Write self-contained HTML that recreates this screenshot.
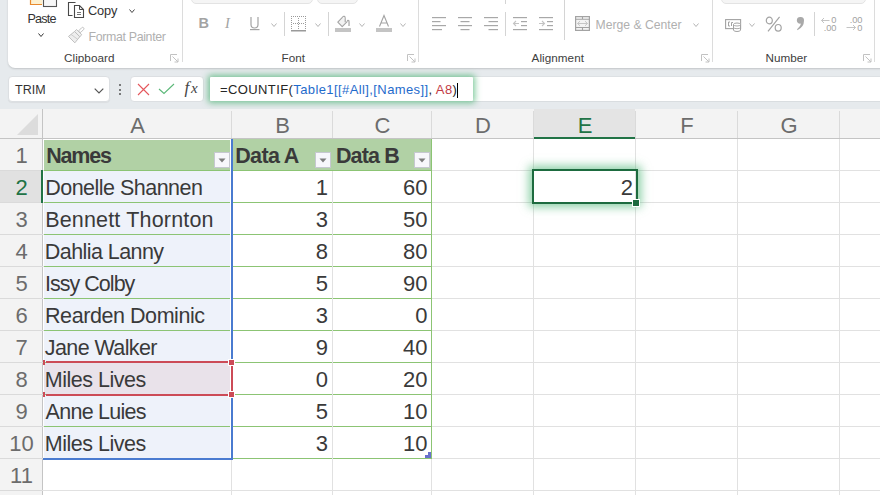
<!DOCTYPE html>
<html><head><meta charset="utf-8"><style>
html,body{margin:0;padding:0;}
body{width:880px;height:495px;overflow:hidden;position:relative;background:#e6eaed;font-family:"Liberation Sans", sans-serif;}
</style></head><body>
<div style="position:absolute;left:8px;top:-12px;width:900px;height:80px;background:#fff;border-radius:7px;box-shadow:0 1px 2px rgba(0,0,0,0.16);"></div>
<div style="position:absolute;left:182px;top:0px;width:1px;height:62px;background:#dcdcdc;"></div>
<div style="position:absolute;left:418px;top:0px;width:1px;height:62px;background:#dcdcdc;"></div>
<div style="position:absolute;left:712px;top:0px;width:1px;height:62px;background:#dcdcdc;"></div>
<div style="position:absolute;left:874px;top:0px;width:1px;height:62px;background:#dcdcdc;"></div>
<div style="position:absolute;left:284px;top:12px;width:1px;height:24px;background:#d4d4d4;"></div>
<div style="position:absolute;left:328px;top:12px;width:1px;height:24px;background:#d4d4d4;"></div>
<div style="position:absolute;left:505px;top:12px;width:1px;height:24px;background:#d4d4d4;"></div>
<div style="position:absolute;left:505px;top:0px;width:1px;height:4px;background:#d4d4d4;"></div>
<div style="position:absolute;left:564px;top:0px;width:1px;height:40px;background:#d4d4d4;"></div>
<div style="position:absolute;left:814px;top:12px;width:1px;height:24px;background:#d4d4d4;"></div>
<div style="position:absolute;left:191px;top:-20px;width:122px;height:23.5px;background:#f5f5f5;border:1px solid #e3e3e3;border-radius:5px;box-sizing:border-box;"></div>
<div style="position:absolute;left:317px;top:-20px;width:41px;height:23.5px;background:#f5f5f5;border:1px solid #e3e3e3;border-radius:5px;box-sizing:border-box;"></div>
<div style="position:absolute;left:721px;top:-20px;width:145px;height:23.5px;background:#f5f5f5;border:1px solid #e3e3e3;border-radius:5px;box-sizing:border-box;"></div>
<div style="position:absolute;left:64px;top:51.41px;font-size:11.7px;line-height:13.07px;color:#404040;font-weight:400;white-space:nowrap;letter-spacing:0.05px;">Clipboard</div>
<div style="position:absolute;left:281.5px;top:51.41px;font-size:11.7px;line-height:13.07px;color:#404040;font-weight:400;white-space:nowrap;letter-spacing:0.05px;">Font</div>
<div style="position:absolute;left:531.6px;top:51.41px;font-size:11.7px;line-height:13.07px;color:#404040;font-weight:400;white-space:nowrap;letter-spacing:0.05px;">Alignment</div>
<div style="position:absolute;left:765.4px;top:51.41px;font-size:11.7px;line-height:13.07px;color:#404040;font-weight:400;white-space:nowrap;letter-spacing:0.05px;">Number</div>
<svg style="position:absolute;left:170px;top:54px" width="9" height="9" viewBox="0 0 9 9"><path d="M0.5 7V0.5H7" fill="none" stroke="#c2c2c2" stroke-width="1"/><path d="M2.5 2.5L8 8M8 4.5V8H4.5" fill="none" stroke="#c2c2c2" stroke-width="1"/></svg>
<svg style="position:absolute;left:407px;top:54px" width="9" height="9" viewBox="0 0 9 9"><path d="M0.5 7V0.5H7" fill="none" stroke="#c2c2c2" stroke-width="1"/><path d="M2.5 2.5L8 8M8 4.5V8H4.5" fill="none" stroke="#c2c2c2" stroke-width="1"/></svg>
<svg style="position:absolute;left:701px;top:54px" width="9" height="9" viewBox="0 0 9 9"><path d="M0.5 7V0.5H7" fill="none" stroke="#c2c2c2" stroke-width="1"/><path d="M2.5 2.5L8 8M8 4.5V8H4.5" fill="none" stroke="#c2c2c2" stroke-width="1"/></svg>
<svg style="position:absolute;left:863px;top:54px" width="9" height="9" viewBox="0 0 9 9"><path d="M0.5 7V0.5H7" fill="none" stroke="#c2c2c2" stroke-width="1"/><path d="M2.5 2.5L8 8M8 4.5V8H4.5" fill="none" stroke="#c2c2c2" stroke-width="1"/></svg>
<svg style="position:absolute;left:24px;top:0px;overflow:visible" width="40" height="10" viewBox="0 0 40 10"><rect x="6.5" y="-4" width="12" height="8.5" fill="#fdf0cf"/><path d="M6.5 -3V4.5H18" fill="none" stroke="#e8892c" stroke-width="1.2"/><rect x="19.5" y="-4" width="13" height="10.5" fill="#f7f7f7" stroke="#555" stroke-width="1.1"/></svg>
<div style="position:absolute;left:27.5px;top:11.60px;font-size:12.6px;line-height:14.07px;color:#333;font-weight:400;white-space:nowrap;letter-spacing:-0.8px;">Paste</div>
<svg style="position:absolute;left:37.5px;top:32.5px;overflow:visible" width="6" height="4" viewBox="0 0 6 4"><path d="M0.5 0.5L3.0 3.5L5.5 0.5" fill="none" stroke="#333" stroke-width="1"/></svg>
<svg style="position:absolute;left:64px;top:0px;overflow:visible" width="24" height="24" viewBox="0 0 24 24"><path d="M11.5 2.5H4.5V15.5H8.5" fill="none" stroke="#484848" stroke-width="1.1"/><path d="M10.5 5.5H15.5L19.5 9.5V17.5H10.5Z" fill="#fff" stroke="#484848" stroke-width="1.1"/><path d="M15.5 5.5V9.5H19.5" fill="none" stroke="#484848" stroke-width="1"/><path d="M13 12.5H17M13 14.5H17" stroke="#666" stroke-width="0.9"/></svg>
<div style="position:absolute;left:88px;top:3.72px;font-size:12.8px;line-height:14.30px;color:#333;font-weight:400;white-space:nowrap;letter-spacing:-0.2px;">Copy</div>
<svg style="position:absolute;left:129px;top:8.7px;overflow:visible" width="6" height="4" viewBox="0 0 6 4"><path d="M0.5 0.5L3.0 3.5L5.5 0.5" fill="none" stroke="#444" stroke-width="1"/></svg>
<svg style="position:absolute;left:64px;top:24px;overflow:visible" width="24" height="24" viewBox="0 0 24 24"><g transform="translate(12 11.3) rotate(45) scale(0.82)"><rect x="-1.6" y="-13" width="3.2" height="7.5" rx="1.6" fill="#fff" stroke="#bdbdbd" stroke-width="1.1"/><rect x="-4.5" y="-5.5" width="9" height="3.5" fill="#f0f0f0" stroke="#bdbdbd" stroke-width="1.1"/><path d="M-4.5 -2L4.5 -2L5.5 7.5L-5.5 7.5Z" fill="#eeeeee" stroke="#bdbdbd" stroke-width="1.1" stroke-linejoin="round"/><path d="M-5 3.5L5 2" stroke="#c4c4c4" stroke-width="0.9"/></g></svg>
<div style="position:absolute;left:88.5px;top:30.98px;font-size:12.4px;line-height:13.85px;color:#b0b0b0;font-weight:400;white-space:nowrap;letter-spacing:-0.35px;">Format Painter</div>
<div style="position:absolute;left:198.5px;top:14.88px;font-size:14.5px;line-height:16.20px;color:#a3a3a3;font-weight:700;white-space:nowrap;">B</div>
<div style="position:absolute;left:225px;top:14.88px;font-size:14.5px;line-height:16.20px;color:#a3a3a3;font-weight:400;white-space:nowrap;font-family:'Liberation Serif',serif;font-style:italic;">I</div>
<svg style="position:absolute;left:249px;top:16px;overflow:visible" width="12" height="15" viewBox="0 0 12 15"><path d="M2 1V8.5Q2 12 5.5 12Q9 12 9 8.5V1" fill="none" stroke="#a3a3a3" stroke-width="1.2"/><path d="M1 13.6H10.5" stroke="#a3a3a3" stroke-width="1.2"/></svg>
<svg style="position:absolute;left:271px;top:23px;overflow:visible" width="6" height="4" viewBox="0 0 6 4"><path d="M0.5 0.5L3.0 3.5L5.5 0.5" fill="none" stroke="#b5b5b5" stroke-width="1"/></svg>
<svg style="position:absolute;left:0;top:0" width="880" height="40"><rect x="291" y="16" width="1" height="1" fill="#9a9a9a"/><rect x="293" y="16" width="1" height="1" fill="#9a9a9a"/><rect x="295" y="16" width="1" height="1" fill="#9a9a9a"/><rect x="297" y="16" width="1" height="1" fill="#9a9a9a"/><rect x="299" y="16" width="1" height="1" fill="#9a9a9a"/><rect x="301" y="16" width="1" height="1" fill="#9a9a9a"/><rect x="303" y="16" width="1" height="1" fill="#9a9a9a"/><rect x="305" y="16" width="1" height="1" fill="#9a9a9a"/><rect x="291" y="18" width="1" height="1" fill="#9a9a9a"/><rect x="291" y="20" width="1" height="1" fill="#9a9a9a"/><rect x="291" y="22" width="1" height="1" fill="#9a9a9a"/><rect x="291" y="24" width="1" height="1" fill="#9a9a9a"/><rect x="291" y="26" width="1" height="1" fill="#9a9a9a"/><rect x="291" y="28" width="1" height="1" fill="#9a9a9a"/><rect x="305" y="18" width="1" height="1" fill="#9a9a9a"/><rect x="305" y="20" width="1" height="1" fill="#9a9a9a"/><rect x="305" y="22" width="1" height="1" fill="#9a9a9a"/><rect x="305" y="24" width="1" height="1" fill="#9a9a9a"/><rect x="305" y="26" width="1" height="1" fill="#9a9a9a"/><rect x="305" y="28" width="1" height="1" fill="#9a9a9a"/><rect x="298" y="18" width="1" height="1" fill="#9a9a9a"/><rect x="298" y="20" width="1" height="1" fill="#9a9a9a"/><rect x="298" y="22" width="1" height="1" fill="#9a9a9a"/><rect x="298" y="24" width="1" height="1" fill="#9a9a9a"/><rect x="298" y="26" width="1" height="1" fill="#9a9a9a"/><rect x="298" y="28" width="1" height="1" fill="#9a9a9a"/><rect x="293" y="23" width="1" height="1" fill="#9a9a9a"/><rect x="295" y="23" width="1" height="1" fill="#9a9a9a"/><rect x="297" y="23" width="1" height="1" fill="#9a9a9a"/><rect x="299" y="23" width="1" height="1" fill="#9a9a9a"/><rect x="301" y="23" width="1" height="1" fill="#9a9a9a"/><rect x="303" y="23" width="1" height="1" fill="#9a9a9a"/><rect x="291" y="30" width="15" height="1.5" fill="#9a9a9a"/></svg>
<svg style="position:absolute;left:314.5px;top:23px;overflow:visible" width="6" height="4" viewBox="0 0 6 4"><path d="M0.5 0.5L3.0 3.5L5.5 0.5" fill="none" stroke="#b5b5b5" stroke-width="1"/></svg>
<svg style="position:absolute;left:335px;top:14px;overflow:visible" width="17" height="18" viewBox="0 0 17 18"><path d="M7.6 3.2L2.8 8.2L7.2 12.6L12.2 7.6" fill="#f2f2f2" stroke="#a3a3a3" stroke-width="1.1" stroke-linejoin="round"/><path d="M7.6 3.2Q8.2 2 9.3 2.3Q10.2 2.7 10.2 4.2V8.2" fill="none" stroke="#a3a3a3" stroke-width="1.1"/><path d="M12.2 7.4Q13 5.6 13.8 6.6Q14.2 7.3 14 12" fill="none" stroke="#a3a3a3" stroke-width="1.2"/><rect x="0" y="14" width="16" height="4" fill="#c4c4c4"/></svg>
<svg style="position:absolute;left:358.5px;top:23px;overflow:visible" width="6" height="4" viewBox="0 0 6 4"><path d="M0.5 0.5L3.0 3.5L5.5 0.5" fill="none" stroke="#b5b5b5" stroke-width="1"/></svg>
<svg style="position:absolute;left:376px;top:14px;overflow:visible" width="17" height="18" viewBox="0 0 17 18"><path d="M3.5 12.5L8 1.5L12.5 12.5M5 9H11" fill="none" stroke="#a3a3a3" stroke-width="1.1"/><rect x="0" y="14" width="16" height="4" fill="#c4c4c4"/></svg>
<svg style="position:absolute;left:399.5px;top:23px;overflow:visible" width="6" height="4" viewBox="0 0 6 4"><path d="M0.5 0.5L3.0 3.5L5.5 0.5" fill="none" stroke="#b5b5b5" stroke-width="1"/></svg>
<svg style="position:absolute;left:0;top:0" width="880" height="40"><rect x="432" y="17" width="14" height="1.2" fill="#a8a8a8"/><rect x="432" y="21" width="8.5" height="1.2" fill="#a8a8a8"/><rect x="432" y="25" width="14" height="1.2" fill="#a8a8a8"/><rect x="432" y="29" width="10" height="1.2" fill="#a8a8a8"/></svg>
<svg style="position:absolute;left:0;top:0" width="880" height="40"><rect x="458" y="17" width="14" height="1.2" fill="#a8a8a8"/><rect x="460.5" y="21" width="9" height="1.2" fill="#a8a8a8"/><rect x="458" y="25" width="14" height="1.2" fill="#a8a8a8"/><rect x="460.5" y="29" width="9" height="1.2" fill="#a8a8a8"/></svg>
<svg style="position:absolute;left:0;top:0" width="880" height="40"><rect x="484" y="17" width="14" height="1.2" fill="#a8a8a8"/><rect x="488.5" y="21" width="9.5" height="1.2" fill="#a8a8a8"/><rect x="484" y="25" width="14" height="1.2" fill="#a8a8a8"/><rect x="488.5" y="29" width="9.5" height="1.2" fill="#a8a8a8"/></svg>
<svg style="position:absolute;left:0;top:0" width="880" height="40"><rect x="513" y="17" width="14" height="1.2" fill="#a8a8a8"/><rect x="521" y="21" width="6" height="1.2" fill="#a8a8a8"/><rect x="521" y="25" width="6" height="1.2" fill="#a8a8a8"/><rect x="513" y="29" width="14" height="1.2" fill="#a8a8a8"/></svg>
<svg style="position:absolute;left:0;top:0" width="880" height="40"><rect x="539" y="17" width="14" height="1.2" fill="#a8a8a8"/><rect x="547" y="21" width="6" height="1.2" fill="#a8a8a8"/><rect x="547" y="25" width="6" height="1.2" fill="#a8a8a8"/><rect x="539" y="29" width="14" height="1.2" fill="#a8a8a8"/></svg>
<svg style="position:absolute;left:512px;top:20px;overflow:visible" width="8" height="7" viewBox="0 0 8 7"><path d="M7 3.5H1.5M4 1L1.5 3.5L4 6" fill="none" stroke="#c4c4c4" stroke-width="1.1"/></svg>
<svg style="position:absolute;left:538px;top:20px;overflow:visible" width="8" height="7" viewBox="0 0 8 7"><path d="M1 3.5H6.5M4 1L6.5 3.5L4 6" fill="none" stroke="#c4c4c4" stroke-width="1.1"/></svg>
<svg style="position:absolute;left:575px;top:16px;overflow:visible" width="15" height="15" viewBox="0 0 15 15"><rect x="0.6" y="0.6" width="13.8" height="13.8" fill="#f4f4f4" stroke="#a3a3a3" stroke-width="1.2"/><path d="M0.5 3.3H14.5M0.5 11.5H14.5M7.5 0.5V3.3M7.5 11.5V14.5" stroke="#a3a3a3" stroke-width="1.1"/><path d="M2.5 7.5H12.5M5 5.2L2.5 7.5L5 9.8M10 5.2L12.5 7.5L10 9.8" fill="none" stroke="#c6c6c6" stroke-width="1"/></svg>
<div style="position:absolute;left:595.5px;top:19.26px;font-size:12.2px;line-height:13.63px;color:#b0b0b0;font-weight:400;white-space:nowrap;">Merge &amp; Center</div>
<svg style="position:absolute;left:692.5px;top:23px;overflow:visible" width="6" height="4" viewBox="0 0 6 4"><path d="M0.5 0.5L3.0 3.5L5.5 0.5" fill="none" stroke="#b5b5b5" stroke-width="1"/></svg>
<svg style="position:absolute;left:725px;top:19px;overflow:visible" width="17" height="13" viewBox="0 0 17 13"><rect x="0.6" y="0.6" width="15" height="9" fill="none" stroke="#a3a3a3" stroke-width="1.1"/><path d="M5 3H3.5V7H5M6.5 7V3.5H8" fill="none" stroke="#a3a3a3" stroke-width="1"/><path d="M8.5 5.5Q8.5 4 12 4Q15.5 4 15.5 5.5V11Q15.5 12.5 12 12.5Q8.5 12.5 8.5 11Z" fill="#fff" stroke="#a3a3a3" stroke-width="1"/><path d="M8.5 5.5Q8.5 7 12 7Q15.5 7 15.5 5.5M8.5 8.3Q8.5 9.7 12 9.7Q15.5 9.7 15.5 8.3" fill="none" stroke="#a3a3a3" stroke-width="0.9"/></svg>
<svg style="position:absolute;left:748.5px;top:23px;overflow:visible" width="6" height="4" viewBox="0 0 6 4"><path d="M0.5 0.5L3.0 3.5L5.5 0.5" fill="none" stroke="#b5b5b5" stroke-width="1"/></svg>
<svg style="position:absolute;left:765px;top:16px;overflow:visible" width="18" height="16" viewBox="0 0 18 16"><ellipse cx="4.3" cy="4.5" rx="3" ry="3.3" fill="none" stroke="#a3a3a3" stroke-width="1.2"/><ellipse cx="13.2" cy="11.8" rx="3" ry="3.3" fill="none" stroke="#a3a3a3" stroke-width="1.2"/><path d="M3 15.3L14.6 0.8" stroke="#a3a3a3" stroke-width="1.2"/></svg>
<svg style="position:absolute;left:790px;top:14px;overflow:visible" width="20" height="20" viewBox="0 0 20 20"><path d="M6.8 6.2A3.5 3.3 0 1 1 14 6.8Q14 13.2 7.4 16.2L7.1 15.2Q10.6 12.6 11 9.6Q7 10 6.8 6.2Z" fill="#a9a9a9"/></svg>
<div style="position:absolute;left:831.2px;top:14.58px;font-size:9.3px;line-height:10.39px;color:#a3a3a3;font-weight:400;white-space:nowrap;">0</div>
<div style="position:absolute;left:823.8px;top:22.58px;font-size:9.3px;line-height:10.39px;color:#a3a3a3;font-weight:400;white-space:nowrap;letter-spacing:-0.2px;">.00</div>
<svg style="position:absolute;left:820px;top:17px;overflow:visible" width="10" height="7" viewBox="0 0 10 7"><path d="M9.5 3.5H1.5M4 1L1.5 3.5L4 6" fill="none" stroke="#c4c4c4" stroke-width="1"/></svg>
<div style="position:absolute;left:849.8px;top:14.58px;font-size:9.3px;line-height:10.39px;color:#a3a3a3;font-weight:400;white-space:nowrap;letter-spacing:-0.2px;">.00</div>
<div style="position:absolute;left:857.2px;top:22.58px;font-size:9.3px;line-height:10.39px;color:#a3a3a3;font-weight:400;white-space:nowrap;">0</div>
<svg style="position:absolute;left:846px;top:24px;overflow:visible" width="11" height="7" viewBox="0 0 11 7"><path d="M0.5 3.5H9.5M7 1L9.5 3.5L7 6" fill="none" stroke="#c4c4c4" stroke-width="1"/></svg>
<div style="position:absolute;left:470px;top:76px;width:420px;height:26px;background:#fff;border-top:1px solid #dde1e4;border-bottom:1px solid #d9dde0;box-sizing:border-box;"></div>
<div style="position:absolute;left:8px;top:76px;width:102px;height:26px;background:#fff;border:1px solid #dcdfe2;box-shadow:0 1px 1px rgba(0,0,0,0.05);border-radius:4px;box-sizing:border-box;"></div>
<div style="position:absolute;left:15px;top:83.69px;font-size:12.5px;line-height:13.96px;color:#333;font-weight:400;white-space:nowrap;">TRIM</div>
<div style="position:absolute;left:130px;top:76px;width:74px;height:26px;background:#fff;border:1px solid #dcdfe2;border-radius:4px;box-sizing:border-box;"></div>
<svg style="position:absolute;left:94px;top:87.5px;overflow:visible" width="10" height="6" viewBox="0 0 10 6"><path d="M0.7 0.7L5 5L9.3 0.7" fill="none" stroke="#555" stroke-width="1.2"/></svg>
<div style="position:absolute;left:119px;top:84px;width:2px;height:2px;background:#555;border-radius:1px;"></div>
<div style="position:absolute;left:119px;top:88.5px;width:2px;height:2px;background:#555;border-radius:1px;"></div>
<div style="position:absolute;left:119px;top:93px;width:2px;height:2px;background:#555;border-radius:1px;"></div>
<svg style="position:absolute;left:137px;top:83px;overflow:visible" width="13" height="13" viewBox="0 0 13 13"><path d="M1 1L12 12M12 1L1 12" stroke="#e5575c" stroke-width="1.1"/></svg>
<svg style="position:absolute;left:158px;top:83px;overflow:visible" width="18" height="12" viewBox="0 0 18 12"><path d="M1 6L6 10.5L16 1" fill="none" stroke="#5bb878" stroke-width="1.1"/></svg>
<div style="position:absolute;left:184.5px;top:78.11px;font-size:17px;line-height:18.99px;color:#444;font-weight:400;white-space:nowrap;font-family:'Liberation Serif',serif;font-style:italic;">f</div>
<div style="position:absolute;left:191px;top:80.42px;font-size:15px;line-height:16.75px;color:#444;font-weight:400;white-space:nowrap;font-family:'Liberation Serif',serif;font-style:italic;">x</div>
<div style="position:absolute;left:210px;top:77px;width:263px;height:24px;background:#fff;box-shadow:0 0 6px 2px rgba(50,170,95,0.62);border-radius:1px;"></div>
<div style="position:absolute;left:220px;top:83.23px;font-size:13px;line-height:14.52px;color:#262626;font-weight:400;white-space:nowrap;letter-spacing:0.4px;"><span style="color:#262626">=COUNTIF(</span><span style="color:#1f6bcc">Table1[[#All],[Names]]</span><span style="color:#262626">, </span><span style="color:#c23b45">A8</span><span style="color:#262626">)</span></div>
<div style="position:absolute;left:457px;top:83px;width:1px;height:15px;background:#000;"></div>
<div style="position:absolute;left:0px;top:109px;width:880px;height:386px;background:#fff;"></div>
<div style="position:absolute;left:0px;top:109px;width:880px;height:29px;background:#f3f3f3;"></div>
<div style="position:absolute;left:0px;top:109px;width:42px;height:386px;background:#f3f3f3;"></div>
<div style="position:absolute;left:0px;top:138px;width:880px;height:1px;background:#c4c4c4;"></div>
<div style="position:absolute;left:42px;top:109px;width:1px;height:386px;background:#c4c4c4;"></div>
<div style="position:absolute;left:231px;top:111px;width:1px;height:27px;background:#dadada;"></div>
<div style="position:absolute;left:332px;top:111px;width:1px;height:27px;background:#dadada;"></div>
<div style="position:absolute;left:431px;top:111px;width:1px;height:27px;background:#dadada;"></div>
<div style="position:absolute;left:533px;top:111px;width:1px;height:27px;background:#dadada;"></div>
<div style="position:absolute;left:635px;top:111px;width:1px;height:27px;background:#dadada;"></div>
<div style="position:absolute;left:737px;top:111px;width:1px;height:27px;background:#dadada;"></div>
<div style="position:absolute;left:839px;top:111px;width:1px;height:27px;background:#dadada;"></div>
<div style="position:absolute;left:231px;top:139px;width:1px;height:356px;background:#e1e1e1;"></div>
<div style="position:absolute;left:332px;top:139px;width:1px;height:356px;background:#e1e1e1;"></div>
<div style="position:absolute;left:431px;top:139px;width:1px;height:356px;background:#e1e1e1;"></div>
<div style="position:absolute;left:533px;top:139px;width:1px;height:356px;background:#e1e1e1;"></div>
<div style="position:absolute;left:635px;top:139px;width:1px;height:356px;background:#e1e1e1;"></div>
<div style="position:absolute;left:737px;top:139px;width:1px;height:356px;background:#e1e1e1;"></div>
<div style="position:absolute;left:839px;top:139px;width:1px;height:356px;background:#e1e1e1;"></div>
<div style="position:absolute;left:0px;top:170px;width:880px;height:1px;background:#e1e1e1;"></div>
<div style="position:absolute;left:0px;top:202px;width:880px;height:1px;background:#e1e1e1;"></div>
<div style="position:absolute;left:0px;top:234px;width:880px;height:1px;background:#e1e1e1;"></div>
<div style="position:absolute;left:0px;top:266px;width:880px;height:1px;background:#e1e1e1;"></div>
<div style="position:absolute;left:0px;top:298px;width:880px;height:1px;background:#e1e1e1;"></div>
<div style="position:absolute;left:0px;top:330px;width:880px;height:1px;background:#e1e1e1;"></div>
<div style="position:absolute;left:0px;top:362px;width:880px;height:1px;background:#e1e1e1;"></div>
<div style="position:absolute;left:0px;top:394px;width:880px;height:1px;background:#e1e1e1;"></div>
<div style="position:absolute;left:0px;top:426px;width:880px;height:1px;background:#e1e1e1;"></div>
<div style="position:absolute;left:0px;top:458px;width:880px;height:1px;background:#e1e1e1;"></div>
<div style="position:absolute;left:0px;top:490px;width:880px;height:1px;background:#e1e1e1;"></div>
<div style="position:absolute;left:0px;top:170px;width:42px;height:1px;background:#dadada;"></div>
<div style="position:absolute;left:0px;top:202px;width:42px;height:1px;background:#dadada;"></div>
<div style="position:absolute;left:0px;top:234px;width:42px;height:1px;background:#dadada;"></div>
<div style="position:absolute;left:0px;top:266px;width:42px;height:1px;background:#dadada;"></div>
<div style="position:absolute;left:0px;top:298px;width:42px;height:1px;background:#dadada;"></div>
<div style="position:absolute;left:0px;top:330px;width:42px;height:1px;background:#dadada;"></div>
<div style="position:absolute;left:0px;top:362px;width:42px;height:1px;background:#dadada;"></div>
<div style="position:absolute;left:0px;top:394px;width:42px;height:1px;background:#dadada;"></div>
<div style="position:absolute;left:0px;top:426px;width:42px;height:1px;background:#dadada;"></div>
<div style="position:absolute;left:0px;top:458px;width:42px;height:1px;background:#dadada;"></div>
<div style="position:absolute;left:0px;top:490px;width:42px;height:1px;background:#dadada;"></div>
<div style="position:absolute;left:534px;top:109px;width:101px;height:28px;background:#e4e4e4;"></div>
<div style="position:absolute;left:534px;top:137px;width:101px;height:2px;background:#217346;"></div>
<div style="position:absolute;left:0px;top:171px;width:41px;height:31px;background:#e1e1e1;"></div>
<div style="position:absolute;left:41px;top:170px;width:2px;height:33px;background:#217346;"></div>
<svg style="position:absolute;left:17px;top:114px" width="22" height="21"><path d="M21 0V21H0Z" fill="#dcdcdc"/></svg>
<div style="position:absolute;left:37.5px;width:200px;text-align:center;top:114.09px;font-size:22px;line-height:24.57px;color:#6c6c6c;font-weight:400;white-space:nowrap;">A</div>
<div style="position:absolute;left:182.5px;width:200px;text-align:center;top:114.09px;font-size:22px;line-height:24.57px;color:#6c6c6c;font-weight:400;white-space:nowrap;">B</div>
<div style="position:absolute;left:282.5px;width:200px;text-align:center;top:114.09px;font-size:22px;line-height:24.57px;color:#6c6c6c;font-weight:400;white-space:nowrap;">C</div>
<div style="position:absolute;left:383.0px;width:200px;text-align:center;top:114.09px;font-size:22px;line-height:24.57px;color:#6c6c6c;font-weight:400;white-space:nowrap;">D</div>
<div style="position:absolute;left:485.0px;width:200px;text-align:center;top:114.09px;font-size:22px;line-height:24.57px;color:#217346;font-weight:400;white-space:nowrap;">E</div>
<div style="position:absolute;left:587.0px;width:200px;text-align:center;top:114.09px;font-size:22px;line-height:24.57px;color:#6c6c6c;font-weight:400;white-space:nowrap;">F</div>
<div style="position:absolute;left:689.0px;width:200px;text-align:center;top:114.09px;font-size:22px;line-height:24.57px;color:#6c6c6c;font-weight:400;white-space:nowrap;">G</div>
<div style="position:absolute;left:791.0px;width:200px;text-align:center;top:114.09px;font-size:22px;line-height:24.57px;color:#6c6c6c;font-weight:400;white-space:nowrap;">H</div>
<div style="position:absolute;left:-78.5px;width:200px;text-align:center;top:144.39px;font-size:22px;line-height:24.57px;color:#6c6c6c;font-weight:400;white-space:nowrap;">1</div>
<div style="position:absolute;left:-78.5px;width:200px;text-align:center;top:176.39px;font-size:22px;line-height:24.57px;color:#217346;font-weight:400;white-space:nowrap;">2</div>
<div style="position:absolute;left:-78.5px;width:200px;text-align:center;top:208.39px;font-size:22px;line-height:24.57px;color:#6c6c6c;font-weight:400;white-space:nowrap;">3</div>
<div style="position:absolute;left:-78.5px;width:200px;text-align:center;top:240.39px;font-size:22px;line-height:24.57px;color:#6c6c6c;font-weight:400;white-space:nowrap;">4</div>
<div style="position:absolute;left:-78.5px;width:200px;text-align:center;top:272.39px;font-size:22px;line-height:24.57px;color:#6c6c6c;font-weight:400;white-space:nowrap;">5</div>
<div style="position:absolute;left:-78.5px;width:200px;text-align:center;top:304.39px;font-size:22px;line-height:24.57px;color:#6c6c6c;font-weight:400;white-space:nowrap;">6</div>
<div style="position:absolute;left:-78.5px;width:200px;text-align:center;top:336.39px;font-size:22px;line-height:24.57px;color:#6c6c6c;font-weight:400;white-space:nowrap;">7</div>
<div style="position:absolute;left:-78.5px;width:200px;text-align:center;top:368.39px;font-size:22px;line-height:24.57px;color:#6c6c6c;font-weight:400;white-space:nowrap;">8</div>
<div style="position:absolute;left:-78.5px;width:200px;text-align:center;top:400.39px;font-size:22px;line-height:24.57px;color:#6c6c6c;font-weight:400;white-space:nowrap;">9</div>
<div style="position:absolute;left:-78.5px;width:200px;text-align:center;top:432.39px;font-size:22px;line-height:24.57px;color:#6c6c6c;font-weight:400;white-space:nowrap;">10</div>
<div style="position:absolute;left:-78.5px;width:200px;text-align:center;top:464.39px;font-size:22px;line-height:24.57px;color:#6c6c6c;font-weight:400;white-space:nowrap;">11</div>
<div style="position:absolute;left:44px;top:140px;width:186px;height:30px;background:#b1d1a5;"></div>
<div style="position:absolute;left:230px;top:139px;width:1px;height:320px;background:#fff;"></div>
<div style="position:absolute;left:233px;top:139px;width:198px;height:31px;background:#b1d1a5;"></div>
<div style="position:absolute;left:44px;top:171px;width:186px;height:31px;background:#eef2fa;"></div>
<div style="position:absolute;left:44px;top:203px;width:186px;height:31px;background:#eef2fa;"></div>
<div style="position:absolute;left:44px;top:235px;width:186px;height:31px;background:#eef2fa;"></div>
<div style="position:absolute;left:44px;top:267px;width:186px;height:31px;background:#eef2fa;"></div>
<div style="position:absolute;left:44px;top:299px;width:186px;height:31px;background:#eef2fa;"></div>
<div style="position:absolute;left:44px;top:331px;width:186px;height:31px;background:#eef2fa;"></div>
<div style="position:absolute;left:44px;top:363px;width:186px;height:31px;background:#eef2fa;"></div>
<div style="position:absolute;left:44px;top:395px;width:186px;height:31px;background:#eef2fa;"></div>
<div style="position:absolute;left:44px;top:427px;width:186px;height:31px;background:#eef2fa;"></div>
<div style="position:absolute;left:44px;top:170px;width:186px;height:1px;background:#8cc474;"></div>
<div style="position:absolute;left:233px;top:170px;width:198px;height:1px;background:#8cc474;"></div>
<div style="position:absolute;left:44px;top:202px;width:186px;height:1px;background:#8cc474;"></div>
<div style="position:absolute;left:233px;top:202px;width:198px;height:1px;background:#8cc474;"></div>
<div style="position:absolute;left:44px;top:234px;width:186px;height:1px;background:#8cc474;"></div>
<div style="position:absolute;left:233px;top:234px;width:198px;height:1px;background:#8cc474;"></div>
<div style="position:absolute;left:44px;top:266px;width:186px;height:1px;background:#8cc474;"></div>
<div style="position:absolute;left:233px;top:266px;width:198px;height:1px;background:#8cc474;"></div>
<div style="position:absolute;left:44px;top:298px;width:186px;height:1px;background:#8cc474;"></div>
<div style="position:absolute;left:233px;top:298px;width:198px;height:1px;background:#8cc474;"></div>
<div style="position:absolute;left:44px;top:330px;width:186px;height:1px;background:#8cc474;"></div>
<div style="position:absolute;left:233px;top:330px;width:198px;height:1px;background:#8cc474;"></div>
<div style="position:absolute;left:44px;top:362px;width:186px;height:1px;background:#8cc474;"></div>
<div style="position:absolute;left:233px;top:362px;width:198px;height:1px;background:#8cc474;"></div>
<div style="position:absolute;left:44px;top:394px;width:186px;height:1px;background:#8cc474;"></div>
<div style="position:absolute;left:233px;top:394px;width:198px;height:1px;background:#8cc474;"></div>
<div style="position:absolute;left:44px;top:426px;width:186px;height:1px;background:#8cc474;"></div>
<div style="position:absolute;left:233px;top:426px;width:198px;height:1px;background:#8cc474;"></div>
<div style="position:absolute;left:44px;top:458px;width:186px;height:1px;background:#8cc474;"></div>
<div style="position:absolute;left:233px;top:458px;width:198px;height:1px;background:#8cc474;"></div>
<div style="position:absolute;left:431px;top:139px;width:1px;height:320px;background:#8cc474;"></div>
<div style="position:absolute;left:332px;top:171px;width:1px;height:288px;background:#e1e1e1;"></div>
<div style="position:absolute;left:231px;top:139px;width:2px;height:321px;background:#4a7bd0;"></div>
<div style="position:absolute;left:43px;top:458px;width:190px;height:2px;background:#4a7bd0;"></div>
<div style="position:absolute;left:44px;top:363px;width:186px;height:31px;background:#e9e2ea;"></div>
<div style="position:absolute;left:46px;top:361px;width:182px;height:2px;background:#cc4b57;"></div>
<div style="position:absolute;left:46px;top:394px;width:182px;height:2px;background:#cc4b57;"></div>
<div style="position:absolute;left:231px;top:366px;width:2px;height:25px;background:#cc4b57;"></div>
<div style="position:absolute;left:228px;top:359px;width:7px;height:7px;background:#fff;"></div>
<div style="position:absolute;left:229px;top:360px;width:5px;height:5px;background:#cc4b57;"></div>
<div style="position:absolute;left:43px;top:360px;width:2px;height:5px;background:#cc4b57;"></div>
<div style="position:absolute;left:228px;top:391px;width:7px;height:7px;background:#fff;"></div>
<div style="position:absolute;left:229px;top:392px;width:5px;height:5px;background:#cc4b57;"></div>
<div style="position:absolute;left:43px;top:392px;width:2px;height:5px;background:#cc4b57;"></div>
<div style="position:absolute;left:428px;top:452px;width:3px;height:6px;background:#6871cc;"></div>
<div style="position:absolute;left:425px;top:455px;width:6px;height:3px;background:#6871cc;"></div>
<div style="position:absolute;left:214px;top:152px;width:16px;height:16px;background:#f7f7fb;border:1px solid #c6c8d0;box-sizing:border-box;"></div>
<svg style="position:absolute;left:218px;top:158px" width="8" height="5"><path d="M0.5 0.5H7.5L4 4.5Z" fill="#7c7c7c"/></svg>
<div style="position:absolute;left:315px;top:152px;width:16px;height:16px;background:#f7f7fb;border:1px solid #c6c8d0;box-sizing:border-box;"></div>
<svg style="position:absolute;left:319px;top:158px" width="8" height="5"><path d="M0.5 0.5H7.5L4 4.5Z" fill="#7c7c7c"/></svg>
<div style="position:absolute;left:414px;top:152px;width:16px;height:16px;background:#f7f7fb;border:1px solid #c6c8d0;box-sizing:border-box;"></div>
<svg style="position:absolute;left:418px;top:158px" width="8" height="5"><path d="M0.5 0.5H7.5L4 4.5Z" fill="#7c7c7c"/></svg>
<div style="position:absolute;left:46.199999999999996px;top:143.54px;font-size:21.5px;line-height:24.02px;color:#3a3a3a;font-weight:700;white-space:nowrap;letter-spacing:-1.175px;">Names</div>
<div style="position:absolute;left:235.20000000000002px;top:143.54px;font-size:21.5px;line-height:24.02px;color:#3a3a3a;font-weight:700;white-space:nowrap;letter-spacing:-0.640px;">Data A</div>
<div style="position:absolute;left:335.90000000000003px;top:143.54px;font-size:21.5px;line-height:24.02px;color:#3a3a3a;font-weight:700;white-space:nowrap;letter-spacing:-0.820px;">Data B</div>
<div style="position:absolute;left:45.20000000000002px;top:175.54px;font-size:21.5px;line-height:24.02px;color:#3a3a3a;font-weight:400;white-space:nowrap;letter-spacing:-0.514px;">Donelle Shannen</div>
<div style="position:absolute;right:552px;top:176.09px;font-size:22px;line-height:24.57px;color:#3a3a3a;font-weight:400;white-space:nowrap;">1</div>
<div style="position:absolute;right:452.5px;top:176.09px;font-size:22px;line-height:24.57px;color:#3a3a3a;font-weight:400;white-space:nowrap;">60</div>
<div style="position:absolute;left:45.20000000000002px;top:207.54px;font-size:21.5px;line-height:24.02px;color:#3a3a3a;font-weight:400;white-space:nowrap;letter-spacing:0.173px;">Bennett Thornton</div>
<div style="position:absolute;right:552px;top:208.09px;font-size:22px;line-height:24.57px;color:#3a3a3a;font-weight:400;white-space:nowrap;">3</div>
<div style="position:absolute;right:452.5px;top:208.09px;font-size:22px;line-height:24.57px;color:#3a3a3a;font-weight:400;white-space:nowrap;">50</div>
<div style="position:absolute;left:44.79999999999998px;top:239.54px;font-size:21.5px;line-height:24.02px;color:#3a3a3a;font-weight:400;white-space:nowrap;letter-spacing:-0.564px;">Dahlia Lanny</div>
<div style="position:absolute;right:552px;top:240.09px;font-size:22px;line-height:24.57px;color:#3a3a3a;font-weight:400;white-space:nowrap;">8</div>
<div style="position:absolute;right:452.5px;top:240.09px;font-size:22px;line-height:24.57px;color:#3a3a3a;font-weight:400;white-space:nowrap;">80</div>
<div style="position:absolute;left:45.0px;top:271.54px;font-size:21.5px;line-height:24.02px;color:#3a3a3a;font-weight:400;white-space:nowrap;letter-spacing:-0.978px;">Issy Colby</div>
<div style="position:absolute;right:552px;top:272.09px;font-size:22px;line-height:24.57px;color:#3a3a3a;font-weight:400;white-space:nowrap;">5</div>
<div style="position:absolute;right:452.5px;top:272.09px;font-size:22px;line-height:24.57px;color:#3a3a3a;font-weight:400;white-space:nowrap;">90</div>
<div style="position:absolute;left:45.0px;top:303.54px;font-size:21.5px;line-height:24.02px;color:#3a3a3a;font-weight:400;white-space:nowrap;letter-spacing:-0.429px;">Rearden Dominic</div>
<div style="position:absolute;right:552px;top:304.09px;font-size:22px;line-height:24.57px;color:#3a3a3a;font-weight:400;white-space:nowrap;">3</div>
<div style="position:absolute;right:452.5px;top:304.09px;font-size:22px;line-height:24.57px;color:#3a3a3a;font-weight:400;white-space:nowrap;">0</div>
<div style="position:absolute;left:44.79999999999998px;top:335.54px;font-size:21.5px;line-height:24.02px;color:#3a3a3a;font-weight:400;white-space:nowrap;letter-spacing:-0.600px;">Jane Walker</div>
<div style="position:absolute;right:552px;top:336.09px;font-size:22px;line-height:24.57px;color:#3a3a3a;font-weight:400;white-space:nowrap;">9</div>
<div style="position:absolute;right:452.5px;top:336.09px;font-size:22px;line-height:24.57px;color:#3a3a3a;font-weight:400;white-space:nowrap;">40</div>
<div style="position:absolute;left:44.79999999999998px;top:367.54px;font-size:21.5px;line-height:24.02px;color:#3a3a3a;font-weight:400;white-space:nowrap;letter-spacing:-0.480px;">Miles Lives</div>
<div style="position:absolute;right:552px;top:368.09px;font-size:22px;line-height:24.57px;color:#3a3a3a;font-weight:400;white-space:nowrap;">0</div>
<div style="position:absolute;right:452.5px;top:368.09px;font-size:22px;line-height:24.57px;color:#3a3a3a;font-weight:400;white-space:nowrap;">20</div>
<div style="position:absolute;left:45.60000000000001px;top:399.54px;font-size:21.5px;line-height:24.02px;color:#3a3a3a;font-weight:400;white-space:nowrap;letter-spacing:-0.733px;">Anne Luies</div>
<div style="position:absolute;right:552px;top:400.09px;font-size:22px;line-height:24.57px;color:#3a3a3a;font-weight:400;white-space:nowrap;">5</div>
<div style="position:absolute;right:452.5px;top:400.09px;font-size:22px;line-height:24.57px;color:#3a3a3a;font-weight:400;white-space:nowrap;">10</div>
<div style="position:absolute;left:44.79999999999998px;top:431.54px;font-size:21.5px;line-height:24.02px;color:#3a3a3a;font-weight:400;white-space:nowrap;letter-spacing:-0.480px;">Miles Lives</div>
<div style="position:absolute;right:552px;top:432.09px;font-size:22px;line-height:24.57px;color:#3a3a3a;font-weight:400;white-space:nowrap;">3</div>
<div style="position:absolute;right:452.5px;top:432.09px;font-size:22px;line-height:24.57px;color:#3a3a3a;font-weight:400;white-space:nowrap;">10</div>
<div style="position:absolute;left:532px;top:169px;width:106px;height:35px;border:2px solid #1d6b3f;box-sizing:border-box;box-shadow:0 0 9px 3px rgba(60,175,105,0.6);"></div>
<div style="position:absolute;left:632px;top:199px;width:8px;height:8px;background:#fff;"></div>
<div style="position:absolute;left:633px;top:200px;width:6px;height:6px;background:#1d6b3f;"></div>
<div style="position:absolute;right:247px;top:176.09px;font-size:22px;line-height:24.57px;color:#3a3a3a;font-weight:400;white-space:nowrap;">2</div>
</body></html>
